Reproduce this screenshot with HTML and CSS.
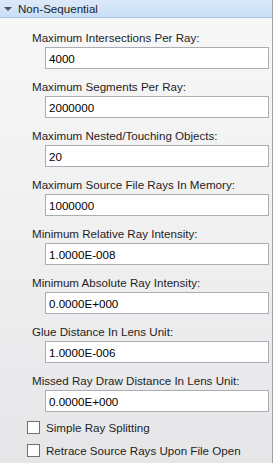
FILE: index.html
```html
<!DOCTYPE html>
<html lang="en">
<head>
  <meta charset="UTF-8">
  <title>Non-Sequential</title>
  <link rel="stylesheet" href="styles.css">
</head>
<body>
<div class="panel">
  <!-- Section header -->
  <div class="section-header">
    <span class="arrow"></span>
    <span class="section-title">Non-Sequential</span>
  </div>

  <div class="fields">
    <div class="field">
      <label>Maximum Intersections Per Ray:</label>
      <input type="text" value="4000">
    </div>
    <div class="field">
      <label>Maximum Segments Per Ray:</label>
      <input type="text" value="2000000">
    </div>
    <div class="field">
      <label>Maximum Nested/Touching Objects:</label>
      <input type="text" value="20">
    </div>
    <div class="field">
      <label>Maximum Source File Rays In Memory:</label>
      <input type="text" value="1000000">
    </div>
    <div class="field">
      <label>Minimum Relative Ray Intensity:</label>
      <input type="text" value="1.0000E-008">
    </div>
    <div class="field">
      <label>Minimum Absolute Ray Intensity:</label>
      <input type="text" value="0.0000E+000">
    </div>
    <div class="field">
      <label>Glue Distance In Lens Unit:</label>
      <input type="text" value="1.0000E-006">
    </div>
    <div class="field">
      <label>Missed Ray Draw Distance In Lens Unit:</label>
      <input type="text" value="0.0000E+000">
    </div>
  </div>

  <div class="checks">
    <label class="check"><span class="box"></span>Simple Ray Splitting</label>
    <label class="check"><span class="box"></span>Retrace Source Rays Upon File Open</label>
  </div>
</div>
</body>
</html>
```

FILE: styles.css
```css
body {
  margin: 0;
  font-family: "Liberation Sans", Arial, sans-serif;
  font-size: 11.6px;
  color: #1e1e1e;
  background: #ffffff;
}

.panel {
  width: 273px;
  height: 463px;
  box-sizing: border-box;
  border-right: 1px solid #a0a0a0;
  background: linear-gradient(to bottom, #f8f8f8 0%, #f0f0f1 50%, #e6e6e9 100%);
  overflow: hidden;
}

/* Blue section header */
.section-header {
  height: 18px;
  box-sizing: border-box;
  display: flex;
  align-items: center;
  background: linear-gradient(to bottom, #dce9f9 0%, #c9dff8 100%);
  border-bottom: 1px solid #a9c4e6;
}

.arrow {
  width: 0;
  height: 0;
  margin: 0 6px 0 4px;
  border-left: 4px solid transparent;
  border-right: 4px solid transparent;
  border-top: 4px solid #555;
}

.section-title {
  color: #1e1e1e;
}

.fields {
  padding: 12px 3px 0 32px;
}

.field {
  display: flex;
  flex-direction: column;
  margin-bottom: 10px;
}

.field label {
  height: 15px;
  line-height: 15px;
  margin-bottom: 2px;
}

.field input {
  margin-left: 13px;
  height: 22px;
  box-sizing: border-box;
  border: 1px solid #abadb3;
  background: #ffffff;
  font-family: inherit;
  font-size: 11.6px;
  color: #000;
  padding: 0 3px;
  outline: none;
}

.checks {
  padding: 0 0 0 27px;
  margin-top: -2px;
  display: flex;
  flex-direction: column;
  gap: 8px;
}

.check {
  display: flex;
  align-items: center;
  height: 15px;
}

.box {
  width: 13px;
  height: 13px;
  box-sizing: border-box;
  border: 1px solid #707070;
  background: #ffffff;
  margin-right: 6px;
}
```
